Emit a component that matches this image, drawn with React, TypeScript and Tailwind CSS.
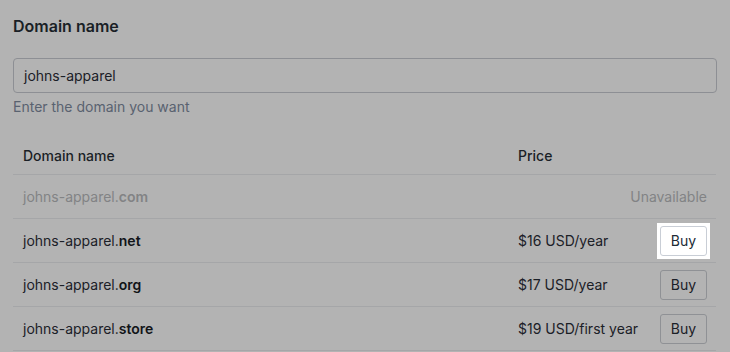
import React from "react";

const rows = [
  { tld: "com", price: null },
  { tld: "net", price: "$16 USD/year", highlight: true },
  { tld: "org", price: "$17 USD/year" },
  { tld: "store", price: "$19 USD/first year" },
];

export default function App() {
  return (
    <div
      className="w-[730px] h-[352px] overflow-hidden bg-[#b3b3b3] px-[13px] pt-[14px] text-[14px] text-[#1b2027]"
      style={{ fontFamily: "Inter, 'Noto Sans', sans-serif" }}
    >
      <div className="text-[16px] leading-[24px] font-semibold text-[#1a1f26]">Domain name</div>
      <div className="mt-[20px] h-[35px] w-[704px] rounded-[4px] border border-[#8d8f94] pl-[10px] flex items-center">
        johns-apparel
      </div>
      <div className="mt-[4px] leading-[20px] text-[#596270]">Enter the domain you want</div>

      <div className="mt-[20px] w-[703px]">
        <div className="flex h-[38px] items-center border-b border-[#a5a6a8] font-medium text-[#1a1f26]">
          <div className="flex-1 pl-[10px]">Domain name</div>
          <div className="w-[198px]">Price</div>
        </div>
        {rows.map((r) => (
          <div key={r.tld} className="flex h-[44px] items-center border-b border-[#a5a6a8]">
            <div className={`flex-1 pl-[10px] ${r.price ? "" : "text-[#828385]"}`}>
              johns-apparel.<span className={`font-semibold ${r.price ? "text-[#111418]" : ""}`}>{r.tld}</span>
            </div>
            <div className="w-[198px] flex items-center justify-between pr-[9px]">
              {r.price ? (
                <>
                  <span>{r.price}</span>
                  {r.highlight ? (
                    <div className="-m-[3px] bg-white p-[3px]">
                      <button className="block h-[30px] w-[47px] rounded-[3px] border border-[#c9ced6] bg-white text-[#212b36]">
                        Buy
                      </button>
                    </div>
                  ) : (
                    <button className="h-[30px] w-[47px] rounded-[3px] border border-[#8f9195] bg-[#b3b3b3] text-[#1b2027]">
                      Buy
                    </button>
                  )}
                </>
              ) : (
                <span className="ml-auto text-[#828385]">Unavailable</span>
              )}
            </div>
          </div>
        ))}
      </div>
    </div>
  );
}
